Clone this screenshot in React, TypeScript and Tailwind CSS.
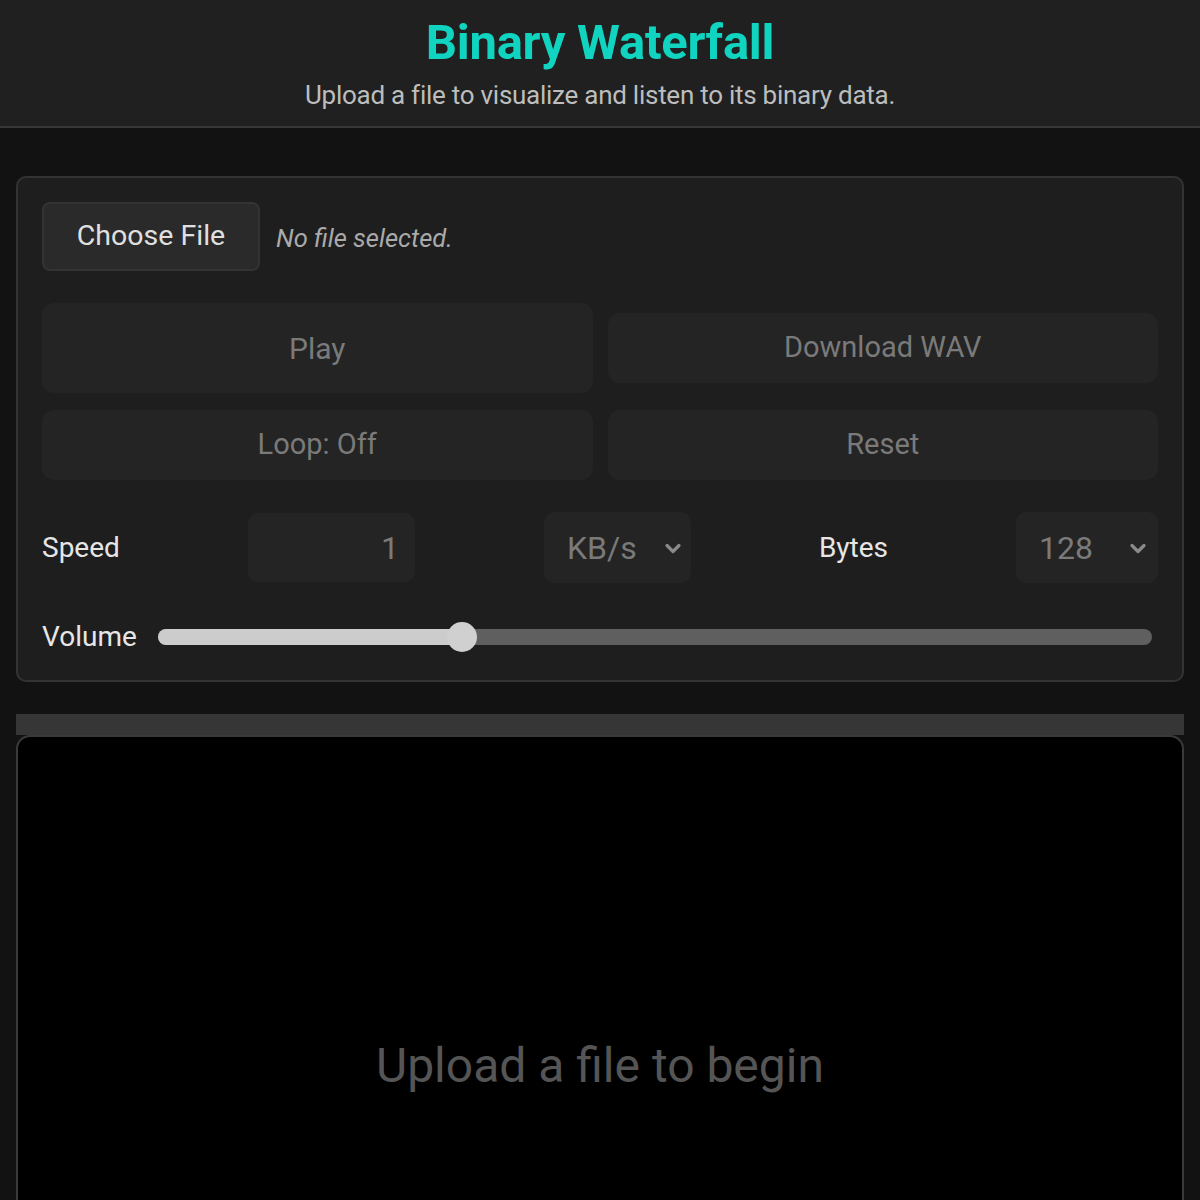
import React from "react";

function Chevron() {
  return (
    <svg width="20" height="20" viewBox="0 0 20 20" fill="none">
      <path d="M4 7.5l6 6 6-6" stroke="#8a8a8a" strokeWidth="3.2" strokeLinecap="round" strokeLinejoin="round" />
    </svg>
  );
}

export default function App() {
  return (
    <div className="min-h-[1200px] bg-[#121212] font-['Roboto',sans-serif] text-[#ddd]">
      <header className="h-[128px] bg-[#202020] border-b-2 border-[#383838] flex flex-col items-center pt-[13px]">
        <h1 className="text-[49px] leading-[60px] font-bold text-[#10d4c0] tracking-[-0.005em]">Binary Waterfall</h1>
        <p className="text-[26px] leading-[30px] mt-[7px] text-[#bdbdbd] tracking-[-0.01em]">Upload a file to visualize and listen to its binary data.</p>
      </header>

      <main className="px-4 pt-[48px]">
        <section className="bg-[#1e1e1e] border-2 border-[#333] rounded-[10px] px-[24px] pt-[24px] pb-[11px]">
          <div className="flex items-center gap-[16px]">
            <button className="w-[218px] h-[69px] bg-[#2a2a2a] border-2 border-[#333] rounded-[8px] text-[28.5px] text-[#e0e0e0]">Choose File</button>
            <span className="italic text-[25.5px] text-[#aaa] mt-[4px]">No file selected.</span>
          </div>

          <div className="grid grid-cols-2 gap-x-[15px] mt-[32px] items-center">
            <div className="h-[90px] bg-[#242424] rounded-[12px] flex items-center justify-center text-[30px] text-[#7a7a7a]">Play</div>
            <div className="h-[70px] bg-[#242424] rounded-[12px] flex items-center justify-center text-[29px] text-[#7a7a7a]">Download WAV</div>
            <div className="h-[70px] mt-[17px] bg-[#242424] rounded-[12px] flex items-center justify-center text-[29px] text-[#7a7a7a]">Loop: Off</div>
            <div className="h-[70px] mt-[17px] bg-[#242424] rounded-[12px] flex items-center justify-center text-[29px] text-[#7a7a7a]">Reset</div>
          </div>

          <div className="grid grid-cols-[206px_167px_129px_147px_325px_142px] items-center mt-[32px] h-[71px]">
            <span className="text-[28px] text-[#e6e6e6]">Speed</span>
            <div className="h-[69px] bg-[#242424] rounded-[10px] flex items-center justify-end pr-[16px] text-[32px] text-[#7a7a7a]">1</div>
            <div />
            <div className="h-[71px] bg-[#242424] rounded-[10px] flex items-center justify-between pl-[23px] pr-[8px] text-[32px] text-[#7a7a7a]">
              <span>KB/s</span>
              <Chevron />
            </div>
            <span className="text-[28px] text-[#e6e6e6] text-center">Bytes</span>
            <div className="h-[71px] bg-[#242424] rounded-[10px] flex items-center justify-between pl-[23px] pr-[10px] text-[32px] text-[#7a7a7a]">
              <span>128</span>
              <Chevron />
            </div>
          </div>

          <div className="flex items-center mt-[22px] h-[64px]">
            <span className="w-[116px] text-[28px] text-[#e6e6e6]">Volume</span>
            <div className="relative flex-1 mr-[6px] h-[16px] rounded-full bg-[#5f5f5f]">
              <div className="absolute left-0 top-0 h-full w-[304px] rounded-full bg-[#cccccc]" />
              <div className="absolute left-[289px] top-[-7px] w-[30px] h-[30px] rounded-full bg-[#d0d0d0]" />
            </div>
          </div>
        </section>

        <div className="mt-[32px] h-[21px] bg-[#363636]" />
        <div className="h-[470px] bg-black border-2 border-b-0 border-[#3a3a3a] rounded-t-[14px] flex items-center justify-center">
          <span className="text-[48px] text-[#555] mt-[190px]">Upload a file to begin</span>
        </div>
      </main>
    </div>
  );
}
